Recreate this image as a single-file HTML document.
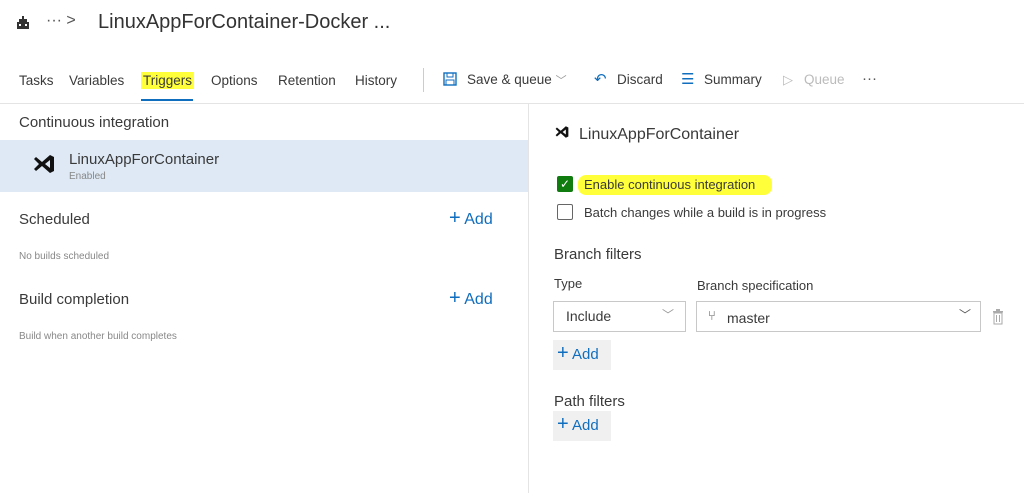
<!DOCTYPE html>
<html><head><style>
*{margin:0;padding:0;box-sizing:border-box}
body{width:1024px;height:493px;background:#fff;font-family:"Liberation Sans",sans-serif;color:#3a3a3a;position:relative;overflow:hidden}
.a{position:absolute;white-space:nowrap}
.hl{background:#ffff3a}
.gray{color:#888}
.add{color:#106ebe;font-size:16px}
.tab{font-size:13.5px}
.btn{position:absolute;background:#f0f0f0;height:30px;width:58px}
</style></head><body>
<svg class="a" style="left:16px;top:16px" width="14" height="14" viewBox="0 0 14 14"><rect x="1" y="6" width="12" height="7" fill="#333"/><rect x="3" y="3" width="8" height="3" fill="#333"/><rect x="6" y="0" width="2" height="3" fill="#333"/><rect x="3" y="8" width="2" height="2" fill="#fff"/><rect x="9" y="8" width="2" height="2" fill="#fff"/></svg>
<div class="a" style="left:46px;top:12px;font-size:16px;color:#555">··· &gt;</div>
<div class="a" style="left:98px;top:11px;font-size:20px;color:#333">LinuxAppForContainer-Docker ...</div>

<div class="a tab" style="left:19px;top:73px">Tasks</div>
<div class="a tab" style="left:69px;top:73px">Variables</div>
<div class="a hl tab" style="left:141px;top:72px;padding:1px 2px">Triggers</div>
<div class="a" style="left:141px;top:99px;width:52px;height:2px;background:#106ebe"></div>
<div class="a tab" style="left:211px;top:73px">Options</div>
<div class="a tab" style="left:278px;top:73px">Retention</div>
<div class="a tab" style="left:355px;top:73px">History</div>
<div class="a" style="left:423px;top:68px;width:1px;height:24px;background:#ccc"></div>
<svg class="a" style="left:443px;top:72px" width="14" height="14" viewBox="0 0 14 14"><rect x="1" y="1" width="12" height="12" fill="none" stroke="#106ebe" stroke-width="1.4"/><rect x="4" y="1" width="6" height="4" fill="none" stroke="#106ebe"/><rect x="3" y="8" width="8" height="5" fill="none" stroke="#106ebe"/></svg>
<div class="a tab" style="left:467px;top:72px">Save &amp; queue <span style="color:#999;font-size:11px">﹀</span></div>
<div class="a" style="left:594px;top:70px;font-size:15px;color:#106ebe">↶</div>
<div class="a tab" style="left:617px;top:72px">Discard</div>
<div class="a" style="left:681px;top:70px;font-size:15px;color:#106ebe">☰</div>
<div class="a tab" style="left:704px;top:72px">Summary</div>
<div class="a" style="left:783px;top:72px;font-size:13px;color:#bbb">▷</div>
<div class="a tab" style="left:804px;top:72px;color:#bbb">Queue</div>
<div class="a" style="left:862px;top:70px;font-size:15px;color:#555">···</div>
<div class="a" style="left:0;top:103px;width:1024px;height:1px;background:#e4e4e4"></div>
<div class="a" style="left:528px;top:104px;width:1px;height:389px;background:#e4e4e4"></div>

<div class="a" style="left:19px;top:114px;font-size:15px">Continuous integration</div>
<div class="a" style="left:0;top:140px;width:528px;height:52px;background:#dee9f5"></div>
<svg class="a" style="left:32px;top:152px" width="24" height="24" viewBox="0 0 24 24"><path d="M2 7 L7 12 L2 17 L4 19 L10 14 L18 21 L22 19 L22 5 L18 3 L10 10 L4 5 Z M18 8 L18 16 L13 12 Z" fill="#111" fill-rule="evenodd"/></svg>
<div class="a" style="left:69px;top:151px;font-size:15px">LinuxAppForContainer</div>
<div class="a gray" style="left:69px;top:171px;font-size:10px">Enabled</div>

<div class="a" style="left:19px;top:211px;font-size:15px">Scheduled</div>
<div class="a add" style="left:449px;top:211px"><span style="font-size:20px;line-height:15px">+</span> Add</div>
<div class="a gray" style="left:19px;top:251px;font-size:10px">No builds scheduled</div>
<div class="a" style="left:19px;top:291px;font-size:15px">Build completion</div>
<div class="a add" style="left:449px;top:291px"><span style="font-size:20px;line-height:15px">+</span> Add</div>
<div class="a gray" style="left:19px;top:331px;font-size:10px">Build when another build completes</div>

<svg class="a" style="left:554px;top:125px" width="16" height="14" viewBox="0 0 24 22"><path d="M2 6 L7 11 L2 16 L4 18 L10 13 L18 20 L22 18 L22 4 L18 2 L10 9 L4 4 Z M18 7 L18 15 L13 11 Z" fill="#111" fill-rule="evenodd"/></svg>
<div class="a" style="left:579px;top:126px;font-size:16px">LinuxAppForContainer</div>
<div class="a hl" style="left:578px;top:175px;width:194px;height:20px;border-radius:8px"></div>
<div class="a" style="left:557px;top:176px;width:16px;height:16px;background:#107c10;border-radius:2px;color:#fff;font-size:12px;text-align:center;line-height:16px">✓</div>
<div class="a" style="left:584px;top:177px;font-size:13px">Enable continuous integration</div>
<div class="a" style="left:557px;top:204px;width:16px;height:16px;border:1px solid #666;border-radius:2px"></div>
<div class="a" style="left:584px;top:205px;font-size:13px">Batch changes while a build is in progress</div>

<div class="a" style="left:554px;top:246px;font-size:15px">Branch filters</div>
<div class="a" style="left:554px;top:276px;font-size:13px">Type</div>
<div class="a" style="left:697px;top:278px;font-size:13px">Branch specification</div>
<div class="a" style="left:553px;top:301px;width:133px;height:31px;border:1px solid #c8c8c8"></div>
<div class="a" style="left:566px;top:308px;font-size:14px">Include</div>
<div class="a" style="left:662px;top:306px;font-size:12px;color:#999">﹀</div>
<div class="a" style="left:696px;top:301px;width:285px;height:31px;border:1px solid #c8c8c8"></div>
<div class="a" style="left:708px;top:308px;font-size:13px;color:#555">⑂</div>
<div class="a" style="left:727px;top:310px;font-size:14px">master</div>
<div class="a" style="left:959px;top:306px;font-size:12px;color:#555">﹀</div>
<svg class="a" style="left:992px;top:309px" width="12" height="16" viewBox="0 0 12 16"><rect x="1" y="2" width="10" height="1.5" fill="#aaa"/><rect x="4" y="0" width="4" height="2" fill="#aaa"/><rect x="2" y="4" width="8" height="11" fill="none" stroke="#aaa"/><path d="M4.5 6v7M7.5 6v7" stroke="#aaa"/></svg>
<div class="btn" style="left:553px;top:340px"></div>
<div class="a add" style="left:557px;top:346px;font-size:15px"><span style="font-size:20px;line-height:15px">+</span> Add</div>
<div class="a" style="left:554px;top:393px;font-size:15px">Path filters</div>
<div class="btn" style="left:553px;top:411px"></div>
<div class="a add" style="left:557px;top:417px;font-size:15px"><span style="font-size:20px;line-height:15px">+</span> Add</div>
</body></html>
